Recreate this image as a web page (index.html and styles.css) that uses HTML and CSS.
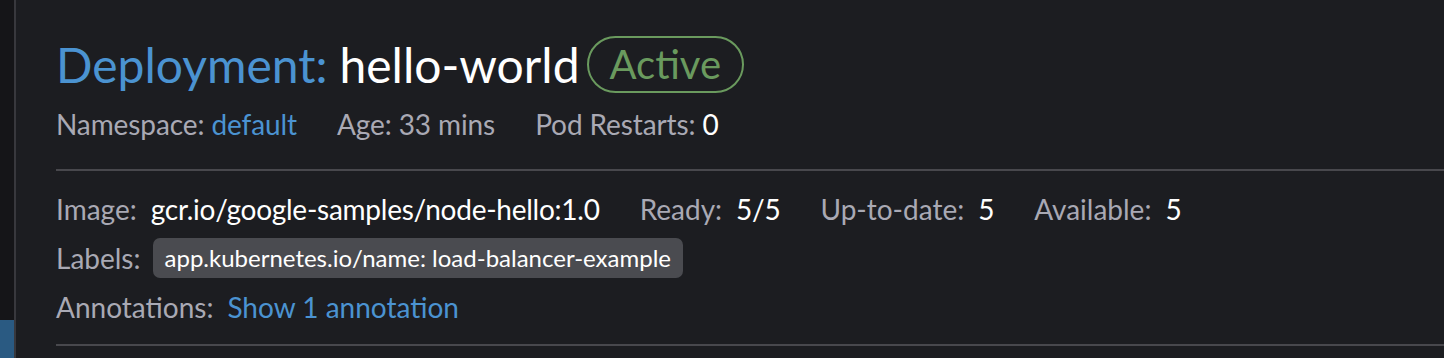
FILE: index.html
```html
<!DOCTYPE html>
<html>
<head>
<meta charset="utf-8">
<link rel="stylesheet" href="styles.css">
</head>
<body>
<div class="app">
  <aside class="sidebar">
    <div class="sidebar-fill"></div>
    <div class="sidebar-active"></div>
  </aside>
  <main class="main">
    <header class="header">
      <h1 class="title">
        <span class="kind">Deployment:</span>
        <span class="name">hello-world</span>
        <span class="status">Active</span>
      </h1>
      <div class="meta">
        <span class="meta-item">Namespace: <a class="link">default</a></span>
        <span class="meta-item">Age: 33 mins</span>
        <span class="meta-item">Pod Restarts: <span class="value">0</span></span>
      </div>
    </header>
    <hr class="divider">
    <section class="details">
      <div class="row">
        <span class="pair"><span class="label">Image:</span><span class="value">gcr.io/google-samples/node-hello:1.0</span></span>
        <span class="pair"><span class="label">Ready:</span><span class="value">5/5</span></span>
        <span class="pair"><span class="label">Up-to-date:</span><span class="value">5</span></span>
        <span class="pair"><span class="label">Available:</span><span class="value">5</span></span>
      </div>
      <div class="row">
        <span class="pair"><span class="label label-tight">Labels:</span><span class="tag">app.kubernetes.io/name: load-balancer-example</span></span>
      </div>
      <div class="row">
        <span class="pair"><span class="label">Annotations:</span><a class="link">Show 1 annotation</a></span>
      </div>
    </section>
    <hr class="divider">
  </main>
</div>
</body>
</html>
```

FILE: styles.css
```css
html, body {
  margin: 0;
  padding: 0;
  background: #1c1d21;
  height: 100%;
}
body {
  font-family: Lato, "Noto Sans", sans-serif;
  color: #a9a9b4;
}
.app {
  display: flex;
  height: 358px;
  overflow: hidden;
}
.sidebar {
  width: 14px;
  flex: none;
  background: #151518;
  border-right: 2px solid #38383d;
  display: flex;
  flex-direction: column;
}
.sidebar-fill {
  height: 320px;
  flex: none;
}
.sidebar-active {
  flex: 1;
  background: #2a5a82;
}
.main {
  flex: 1;
  padding-left: 40px;
}
.header {
  padding-top: 36px;
}
.title {
  margin: 0;
  display: flex;
  align-items: center;
  font-size: 48px;
  font-weight: 400;
  line-height: 57px;
  height: 57px;
}
.kind {
  color: #4b93d1;
  margin-right: 12px;
}
.name {
  color: #ffffff;
}
.status {
  margin-left: 7px;
  box-sizing: border-box;
  height: 57px;
  padding: 0 21px;
  border: 2px solid #6a9a5e;
  border-radius: 29px;
  color: #6a9a5e;
  font-size: 40px;
  line-height: 52px;
}
.meta {
  margin-top: 14px;
  display: flex;
  gap: 40px;
  font-size: 28px;
  line-height: 34px;
  letter-spacing: -0.1px;
}
.link {
  color: #4b93d1;
  text-decoration: none;
}
.value {
  color: #ffffff;
}
.divider {
  margin: 28px 0 0;
  border: 0;
  height: 2px;
  background: #48484d;
}
.details {
  padding-top: 21px;
  padding-bottom: 20px;
  display: flex;
  flex-direction: column;
  gap: 12px;
  font-size: 28px;
  line-height: 34px;
}
.details + .divider {
  margin-top: 0;
}
.details .value {
  letter-spacing: -0.25px;
}
.row {
  display: flex;
  align-items: center;
  gap: 40px;
}
.pair {
  display: flex;
  align-items: center;
}
.label {
  margin-right: 14px;
}
.label-tight {
  margin-right: 12px;
}
.tag {
  background: #4a4b50;
  color: #ffffff;
  font-size: 24px;
  line-height: 40px;
  padding: 0 12px;
  border-radius: 7px;
}
```
